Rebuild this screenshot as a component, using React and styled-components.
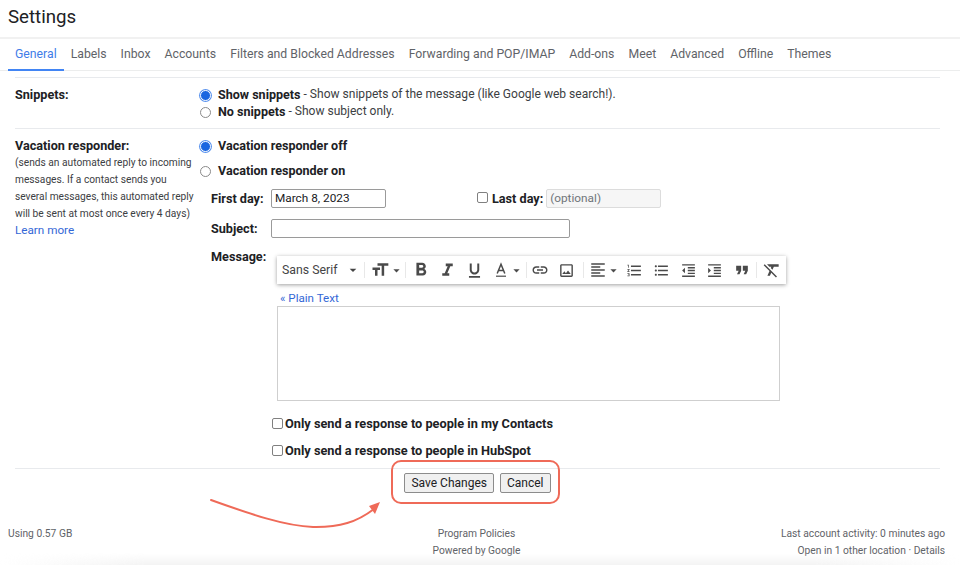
import React from "react";
import styled, { createGlobalStyle } from "styled-components";
import {
  MdFormatBold, MdFormatItalic, MdFormatUnderlined, MdLink, MdOutlineImage, MdFormatAlignLeft,
  MdFormatListNumbered, MdFormatListBulleted, MdFormatIndentDecrease, MdFormatIndentIncrease,
  MdFormatQuote, MdFormatClear, MdArrowDropDown, MdFormatSize,
} from "react-icons/md";

const Global = createGlobalStyle`
  html, body { margin: 0; padding: 0; background: #fff; }
  body { font-family: Roboto, "Liberation Sans", sans-serif; color: #202124; }
`;

const Page = styled.div`
  position: relative;
  width: 960px;
  height: 565px;
  overflow: hidden;
  background: #fff;
`;
const Header = styled.header`
  height: 39px;
  padding-left: 8px;
  font-size: 18.7px;
  line-height: 35px;
  color: #202124;
  box-sizing: border-box;
  border-bottom: 2px solid #f1f1f1;
`;
const Tabs = styled.nav`
  display: flex;
  height: 32px;
  padding-left: 8px;
  box-sizing: border-box;
  border-bottom: 1px solid #eceded;
`;
const Tab = styled.div`
  padding: 0 7px;
  font-size: 12.25px;
  line-height: 31px;
  height: 32px;
  box-sizing: border-box;
  white-space: nowrap;
  color: ${(p) => (p.$active ? "#3f7de8" : "#5f6368")};
  border-bottom: ${(p) => (p.$active ? "2px solid #4285f4" : "none")};
`;
const Body = styled.main`
  margin: 6px 20px 0 15px;
  border-top: 1px solid #e8eaed;
`;
const Row = styled.section`
  display: grid;
  grid-template-columns: 184px 1fr;
  padding: 8px 0;
  border-bottom: 1px solid #e8eaed;
  font-size: 12.05px;
  line-height: 17px;
`;
const Aside = styled.div`
  font-size: 10.2px;
  color: #3c4043;
  line-height: 17px;
  white-space: nowrap;
`;
const Title = styled.div`
  font-size: 12.65px;
  font-weight: 700;
  color: #202124;
`;
const LearnMore = styled.a`
  color: #3367d6;
  font-size: 11.7px;
  display: block;
`;
const Options = styled.div`
  display: flex;
  flex-direction: column;
  gap: ${(p) => p.$gap || 0}px;
`;
const Option = styled.div`
  display: flex;
  align-items: center;
  height: 17px;
  white-space: nowrap;
  color: #3c4043;
`;
const Radio = styled.span`
  width: 11px;
  height: 11px;
  margin: 2px 7px 0 1px;
  border-radius: 50%;
  box-sizing: border-box;
  flex: none;
  background: ${(p) => (p.$on ? "#1a66e0" : "#fff")};
  border: 1px solid ${(p) => (p.$on ? "#fff" : "#8a8a8a")};
  box-shadow: ${(p) => (p.$on ? "0 0 0 1px #5a93ee" : "none")};
`;
const Strong = styled.b`
  font-size: 12.55px;
  font-weight: 700;
  color: #202124;
`;
const Form = styled.div`
  display: grid;
  grid-template-columns: 60px 1fr;
  margin: 10px 0 0 12px;
  align-items: center;
`;
const FieldLabel = styled.div`
  font-size: 12.65px;
  font-weight: 700;
  color: #202124;
  white-space: nowrap;
`;
const DateLine = styled.div`
  display: flex;
  align-items: center;
  height: 19px;
`;
const Input = styled.div`
  box-sizing: border-box;
  width: ${(p) => p.$w}px;
  height: 19px;
  line-height: 17px;
  padding-left: 3px;
  font-size: 11.8px;
  font-weight: 400;
  flex: none;
  color: ${(p) => (p.$off ? "#70757a" : "#202124")};
  background: ${(p) => (p.$off ? "#f6f6f6" : "#fff")};
  border: 1px solid ${(p) => (p.$off ? "#dcdcdc" : "#9a9a9a")};
  border-radius: 2px;
`;
const Check = styled.span`
  display: block;
  width: 11px;
  height: 11px;
  flex: none;
  box-sizing: border-box;
  background: #fff;
  border: 1px solid #808080;
  border-radius: 2px;
`;
const LastDay = styled.div`
  display: flex;
  align-items: center;
  margin-left: 91px;
  font-size: 12.65px;
  font-weight: 700;
  white-space: nowrap;
  ${Check} { margin: -2px 4px 0 0; }
  ${Input} { margin-left: 3px; }
`;
const SubjectLabel = styled(FieldLabel)`
  margin-top: 10px;
`;
const SubjectInput = styled(Input)`
  margin-top: 11px;
`;
const MessageLabel = styled(FieldLabel)`
  margin-top: 10px;
  align-self: start;
`;
const Composer = styled.div`
  grid-column: 2;
  margin-left: 6px;
`;
const MessageRow = styled.div`
  display: grid;
  grid-template-columns: 60px 1fr;
  margin-left: 12px;
`;
const Toolbar = styled.div`
  display: flex;
  align-items: center;
  width: 509px;
  height: 28px;
  margin-top: 18px;
  box-sizing: border-box;
  background: #fff;
  box-shadow: 0 1px 4px rgba(0, 0, 0, 0.38);
  color: #4a4a4a;
`;
const FontSelect = styled.div`
  display: flex;
  align-items: center;
  justify-content: space-between;
  width: 87px;
  padding: 0 3px 0 5px;
  box-sizing: border-box;
  font-size: 12.3px;
  color: #444;
  white-space: nowrap;
`;
const Sep = styled.span`
  width: 1px;
  height: 16px;
  margin-left: ${(p) => p.$left || 0}px;
  margin-right: ${(p) => p.$right || 0}px;
  background: #e8e8e8;
  flex: none;
`;
const Tool = styled.span`
  display: flex;
  align-items: center;
  justify-content: center;
  flex: none;
  width: ${(p) => p.$w || 26.7}px;
  height: 28px;
  svg { display: block; flex: none; }
`;
const MenuTool = styled(Tool)`
  justify-content: flex-start;
  padding-left: ${(p) => p.$pad}px;
  box-sizing: border-box;
`;
const Caret = styled(MdArrowDropDown)`
  margin-left: -1px;
`;
const PlainText = styled.a`
  display: block;
  margin: 7px 0 0 3px;
  font-size: 11.6px;
  line-height: 15px;
  color: #3367d6;
`;
const MessageBox = styled.div`
  width: 503px;
  height: 95px;
  box-sizing: border-box;
  border: 1px solid #cfcfcf;
`;
const ChoiceRow = styled.div`
  display: flex;
  align-items: center;
  height: 17px;
  margin: ${(p) => p.$top}px 0 ${(p) => p.$bottom || 0}px 73px;
  font-size: 12.75px;
  font-weight: 700;
  color: #202124;
  ${Check} { margin: -1px 2px 0 0; }
`;
const Actions = styled.div`
  display: flex;
  justify-content: center;
  gap: 6px;
  padding-top: 4px;
`;
const Button = styled.div`
  box-sizing: border-box;
  height: 20px;
  padding: 0 6px;
  line-height: 18px;
  font-size: 12px;
  color: #202124;
  background: #f0f0f0;
  border: 1px solid #8c8c8c;
  border-radius: 2px;
`;
const Footer = styled.footer`
  display: grid;
  grid-template-columns: 1fr 1fr 1fr;
  margin-top: 33px;
  padding: 0 15px 0 8px;
  font-size: 10.25px;
  line-height: 16.5px;
  color: #5f6368;
`;
const FootCell = styled.div`
  text-align: ${(p) => p.$align};
  white-space: nowrap;
`;
const Fade = styled.div`
  position: absolute;
  left: 0;
  right: 0;
  bottom: 0;
  height: 12px;
  background: linear-gradient(to right, rgba(244, 244, 244, 0), #f4f4f4 15%, #f4f4f4 85%, rgba(244, 244, 244, 0));
  mask-image: linear-gradient(to bottom, transparent, #000);
  pointer-events: none;
`;
const Highlight = styled.div`
  position: absolute;
  left: 391px;
  top: 460px;
  width: 169px;
  height: 44px;
  box-sizing: border-box;
  border: 2px solid #ef6a58;
  border-radius: 10px;
`;
const Arrow = styled.svg`
  position: absolute;
  left: 205px;
  top: 495px;
`;

const tabs = ["General", "Labels", "Inbox", "Accounts", "Filters and Blocked Addresses", "Forwarding and POP/IMAP", "Add-ons", "Meet", "Advanced", "Offline", "Themes"];

const TextColorIcon = () => (
  <svg width="18" height="18" viewBox="0 0 18 18" fill="none" stroke="currentColor">
    <path d="M5.2 12.5 9 3.2l3.8 9.3M6.4 9.6h5.2" strokeWidth="1.5" />
    <path d="M4 15.2h10" strokeWidth="1.2" />
  </svg>
);

export default function App() {
  return (
    <Page>
      <Global />
      <Header>Settings</Header>
      <Tabs>
        {tabs.map((t, i) => <Tab key={t} $active={i === 0}>{t}</Tab>)}
      </Tabs>
      <Body>
        <Row>
          <Title>Snippets:</Title>
          <Options>
            <Option><Radio $on /><Strong>Show snippets</Strong>&nbsp;- Show snippets of the message (like Google web search!).</Option>
            <Option><Radio /><Strong>No snippets</Strong>&nbsp;- Show subject only.</Option>
          </Options>
        </Row>
        <Row>
          <Aside>
            <Title>Vacation responder:</Title>
            (sends an automated reply to incoming<br />
            messages. If a contact sends you<br />
            several messages, this automated reply<br />
            will be sent at most once every 4 days)
            <LearnMore>Learn more</LearnMore>
          </Aside>
          <div>
            <Options $gap={8}>
              <Option><Radio $on /><Strong>Vacation responder off</Strong></Option>
              <Option><Radio /><Strong>Vacation responder on</Strong></Option>
            </Options>
            <Form>
              <FieldLabel>First day:</FieldLabel>
              <DateLine>
                <Input $w={115}>March 8, 2023</Input>
                <LastDay>
                  <Check />Last day:
                  <Input $w={115} $off>(optional)</Input>
                </LastDay>
              </DateLine>
              <SubjectLabel>Subject:</SubjectLabel>
              <SubjectInput $w={299} />
            </Form>
            <MessageRow>
              <MessageLabel>Message:</MessageLabel>
              <Composer>
                <Toolbar>
                  <FontSelect>Sans Serif<MdArrowDropDown size={16} /></FontSelect>
                  <Sep />
                  <MenuTool $w={40} $pad={5}><MdFormatSize size={20} /><Caret size={15} /></MenuTool>
                  <Sep $right={2} />
                  <Tool><MdFormatBold size={22} /></Tool>
                  <Tool><MdFormatItalic size={21} /></Tool>
                  <Tool><MdFormatUnderlined size={19} /></Tool>
                  <MenuTool $w={38} $pad={4}><TextColorIcon /><Caret size={15} /></MenuTool>
                  <Sep />
                  <Tool><MdLink size={18} /></Tool>
                  <Tool><MdOutlineImage size={17} /></Tool>
                  <Sep $left={2.5} />
                  <MenuTool $w={38} $pad={5}><MdFormatAlignLeft size={18} /><Caret size={15} /></MenuTool>
                  <Tool><MdFormatListNumbered size={17} /></Tool>
                  <Tool><MdFormatListBulleted size={17} /></Tool>
                  <Tool><MdFormatIndentDecrease size={17} /></Tool>
                  <Tool><MdFormatIndentIncrease size={17} /></Tool>
                  <Tool><MdFormatQuote size={20} /></Tool>
                  <Sep $left={1} />
                  <Tool $w={29}><MdFormatClear size={20} /></Tool>
                </Toolbar>
                <PlainText>« Plain Text</PlainText>
                <MessageBox />
              </Composer>
            </MessageRow>
            <ChoiceRow $top={14}><Check />Only send a response to people in my Contacts</ChoiceRow>
            <ChoiceRow $top={10} $bottom={1}><Check />Only send a response to people in HubSpot</ChoiceRow>
          </div>
        </Row>
        <Actions>
          <Button>Save Changes</Button>
          <Button>Cancel</Button>
        </Actions>
      </Body>
      <Footer>
        <FootCell $align="left">Using 0.57 GB</FootCell>
        <FootCell $align="center">Program Policies<br />Powered by Google</FootCell>
        <FootCell $align="right">Last account activity: 0 minutes ago<br />Open in 1 other location · Details</FootCell>
      </Footer>
      <Fade />
      <Highlight />
      <Arrow width="185" height="40" viewBox="0 0 185 40" fill="none">
        <path d="M6 5 C45 19 80 31 108 32 C135 32.5 152 27 169 14" stroke="#ef6a58" strokeWidth="2" strokeLinecap="round" />
        <path d="M175 7 L164 11 L170 19 Z" fill="#ef6a58" />
      </Arrow>
    </Page>
  );
}
